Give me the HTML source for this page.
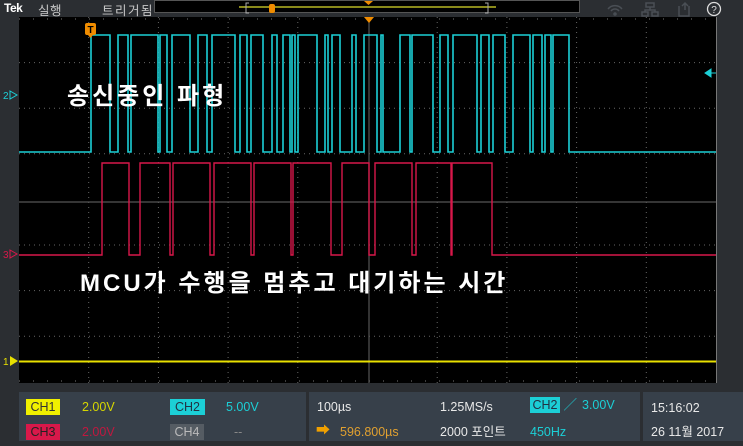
<!DOCTYPE html>
<html><head><meta charset="utf-8"><style>
html,body{margin:0;padding:0;background:#2b2e32;}
body{width:743px;height:446px;position:relative;overflow:hidden;font-family:"Liberation Sans","Noto Sans CJK KR",sans-serif;}
.t{position:absolute;white-space:nowrap;}
.b{position:absolute;font-size:12.5px;line-height:16px;}
.badge{position:absolute;height:16px;line-height:16px;font-size:12.5px;text-align:center;}
</style></head><body>
<!-- top bar -->
<div class="t" style="left:4px;top:1px;color:#fff;font-weight:bold;font-size:12px;letter-spacing:-0.5px">Tek</div>
<div class="t" style="left:38px;top:0px;color:#c8c8c8;font-size:12.5px;letter-spacing:0.5px">실행</div>
<div class="t" style="left:102px;top:0px;color:#c8c8c8;font-size:12.5px;letter-spacing:1.5px">트리거됨</div>
<div style="position:absolute;left:154px;top:0;width:426px;height:13px;background:#000;border:1px solid #555;box-sizing:border-box"></div>
<svg width="743" height="446" style="position:absolute;left:0;top:0">
<line x1="239" y1="7" x2="496" y2="7" stroke="#8a8a1a" stroke-width="2"/>
<path d="M249 3 H246 V13 H249 M485 3 H488 V13 H485" stroke="#aaa" fill="none"/>
<rect x="269" y="4" width="6" height="9" rx="2" fill="#f08c00"/>
<path d="M364 1 H373 L368.5 5 Z" fill="#f08c00"/>
<g stroke="#4a4f55" fill="none" stroke-width="1.5">
<path d="M608 9 A9 9 0 0 1 622 9 M611 11 A5 5 0 0 1 619 11"/><circle cx="615" cy="14" r="1"/>
<path d="M646 3 h8 v4 h-8 z M642 12 h6 v4 h-6 z M652 12 h6 v4 h-6 z M650 7 v3 M645 12 v-2 h10 v2"/>
<path d="M679 6 v10 h10 v-10 M685 10 v-7 M682 6 l3 -3 l3 3"/>
</g>
<circle cx="714" cy="9" r="6.5" stroke="#ddd" fill="none" stroke-width="1.3"/>
<text x="714" y="13" font-size="10" fill="#ddd" text-anchor="middle" font-family="Liberation Sans">?</text>
<rect x="19" y="17" width="697" height="366" fill="#000"/>
<g stroke="#666" stroke-width="1" stroke-dasharray="1 4">
<line x1="88.7" y1="17" x2="88.7" y2="383"/><line x1="158.4" y1="17" x2="158.4" y2="383"/><line x1="228.1" y1="17" x2="228.1" y2="383"/><line x1="297.8" y1="17" x2="297.8" y2="383"/><line x1="437.2" y1="17" x2="437.2" y2="383"/><line x1="506.9" y1="17" x2="506.9" y2="383"/><line x1="576.6" y1="17" x2="576.6" y2="383"/><line x1="646.3" y1="17" x2="646.3" y2="383"/>
<line x1="19" y1="62.6" x2="716" y2="62.6"/><line x1="19" y1="108.2" x2="716" y2="108.2"/><line x1="19" y1="153.8" x2="716" y2="153.8"/><line x1="19" y1="245" x2="716" y2="245"/><line x1="19" y1="290.6" x2="716" y2="290.6"/><line x1="19" y1="336.2" x2="716" y2="336.2"/>
</g>
<g stroke="#777" stroke-width="1" stroke-dasharray="1 13">
<line x1="19" y1="19" x2="716" y2="19"/><line x1="19" y1="381" x2="716" y2="381"/>
</g>
<line x1="19" y1="202" x2="716" y2="202" stroke="#555" stroke-width="1.2"/>
<line x1="369" y1="17" x2="369" y2="383" stroke="#555" stroke-width="1.2"/>
<line x1="716.5" y1="17" x2="716.5" y2="383" stroke="#777"/>
<path d="M364 17 H374 L369 23 Z" fill="#f08c00"/>
<path d="M19 152 H91 V35 H110 V152 H118 V35 H128 V152 H131 V35 H158 V152 H160 V35 H167 V152 H172 V35 H190 V152 H198 V35 H207 V152 H212 V35 H235 V152 H240 V35 H247 V152 H251 V35 H263 V152 H272 V35 H277 V152 H283 V35 H290 V152 H292 V35 H295 V152 H298 V35 H317 V152 H325 V35 H328 V152 H332 V35 H340 V152 H352 V35 H356 V152 H364 V35 H377 V152 H381 V35 H383 V152 H400 V35 H410 V152 H412 V35 H433 V152 H440 V35 H448 V152 H453 V35 H477 V152 H481 V35 H489 V152 H493 V35 H505 V152 H513 V35 H530 V152 H533 V35 H542 V152 H545 V35 H551 V152 H553 V35 H569 V152 H716" stroke="#1ccfd6" stroke-width="1.6" fill="none"/>
<path d="M19 255 H102 V163 H129 V255 H140 V163 H170 V255 H173 V163 H210 V255 H214 V163 H251 V255 H254 V163 H291 V255 H293 V163 H331 V255 H342 V163 H369 V255 H375 V163 H412 V255 H416 V163 H451 V255 H452 V163 H492 V255 H716" stroke="#d8184a" stroke-width="1.4" fill="none"/>
<line x1="19" y1="361.5" x2="716" y2="361.5" stroke="#e8e000" stroke-width="2"/>
<rect x="85" y="23" width="11" height="12" rx="2" fill="#f08c00"/>
<path d="M88 35 L90.5 38 L93 35Z" fill="#f08c00"/>
<text x="90.5" y="33" font-size="10" font-weight="bold" fill="#000" text-anchor="middle" font-family="Liberation Sans">T</text>
<text x="3" y="99" font-size="10" fill="#1ccfd6" font-family="Liberation Sans">2</text>
<path d="M10 91 L17 95 L10 99 Z" stroke="#1ccfd6" fill="none"/>
<text x="3" y="258" font-size="10" fill="#d8184a" font-family="Liberation Sans">3</text>
<path d="M10 250 L17 254 L10 258 Z" stroke="#d8184a" fill="none"/>
<text x="3" y="365" font-size="10" fill="#e8e000" font-family="Liberation Sans">1</text>
<path d="M10 356 L18 361 L10 366 Z" fill="#e8e000"/>
<path d="M705 73 L711 69 L711 77 Z M711 73 H716" stroke="#1ccfd6" fill="#1ccfd6"/>
</svg>
<div class="t" style="left:67px;top:76px;color:#fff;font-weight:bold;font-size:24px;letter-spacing:3px">송신중인 파형</div>
<div class="t" style="left:80px;top:263px;color:#fff;font-weight:bold;font-size:24px;letter-spacing:3px">MCU가 수행을 멈추고 대기하는 시간</div>
<div style="position:absolute;left:19px;top:392px;width:287px;height:49px;background:#37404a"></div>
<div style="position:absolute;left:309px;top:392px;width:331px;height:49px;background:#37404a"></div>
<div style="position:absolute;left:643px;top:392px;width:100px;height:49px;background:#37404a"></div>
<div class="badge" style="left:26px;top:399px;width:34px;background:#f0f000;color:#333">CH1</div>
<div class="b" style="left:82px;top:399px;color:#d6d600">2.00V</div>
<div class="badge" style="left:170px;top:399px;width:35px;background:#1ccfd6;color:#234">CH2</div>
<div class="b" style="left:226px;top:399px;color:#1ccfd6">5.00V</div>
<div class="badge" style="left:26px;top:424px;width:34px;background:#d8184a;color:#222">CH3</div>
<div class="b" style="left:82px;top:424px;color:#c0183f">2.00V</div>
<div class="badge" style="left:170px;top:424px;width:34px;background:#555c63;color:#bbb">CH4</div>
<div class="b" style="left:234px;top:424px;color:#888">--</div>
<div class="b" style="left:317px;top:399px;color:#e8e8e8">100µs</div>
<div class="b" style="left:440px;top:399px;color:#e8e8e8">1.25MS/s</div>
<div class="badge" style="left:530px;top:397px;width:30px;background:#1ccfd6;color:#234">CH2</div>
<div class="b" style="left:564px;top:397px;color:#1ccfd6">╱</div>
<div class="b" style="left:582px;top:397px;color:#1ccfd6">3.00V</div>
<div class="b" style="left:316px;top:422px;color:#f0a000;font-size:14px">➡</div>
<div class="b" style="left:340px;top:424px;color:#e0a030">596.800µs</div>
<div class="b" style="left:440px;top:424px;color:#e8e8e8">2000 포인트</div>
<div class="b" style="left:530px;top:424px;color:#1ccfd6">450Hz</div>
<div class="b" style="left:651px;top:400px;color:#e8e8e8">15:16:02</div>
<div class="b" style="left:651px;top:424px;color:#e8e8e8">26 11월 2017</div>
</body></html>
